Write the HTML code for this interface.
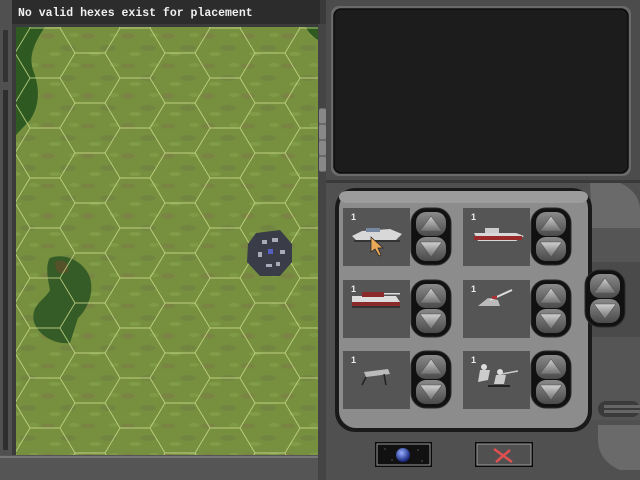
<!DOCTYPE html>
<html><head><meta charset="utf-8"><style>
html,body{margin:0;padding:0;background:#2a2a2a;width:640px;height:480px;overflow:hidden}
svg{display:block}
</style></head><body>
<svg width="640" height="480" viewBox="0 0 640 480" xmlns="http://www.w3.org/2000/svg">
<defs>
<pattern id="mottle" patternUnits="userSpaceOnUse" width="40" height="30">
<rect width="40" height="30" fill="#76903f"/>
<ellipse cx="8" cy="6" rx="7" ry="3" fill="#7d7a48" opacity="0.5"/>
<ellipse cx="28" cy="18" rx="8" ry="3" fill="#6f7e42" opacity="0.6"/>
<ellipse cx="15" cy="24" rx="6" ry="2" fill="#88a450" opacity="0.6"/>
<ellipse cx="34" cy="5" rx="5" ry="2" fill="#86a04c" opacity="0.6"/>
</pattern>
<pattern id="hex" patternUnits="userSpaceOnUse" x="0" y="3" width="90" height="50">
<g fill="none" stroke="#cfe08f" stroke-width="0.9" opacity="0.8">
<path d="M-15,0 L-30,-25 M-15,0 L-30,25 M-15,0 L15,0 M15,0 L30,-25 M15,0 L30,25 M30,25 L60,25 M60,25 L75,0 M60,25 L75,50 M75,0 L105,0 M75,50 L105,50 M-15,50 L15,50 M15,50 L30,25 M15,50 L30,75 M75,0 L60,-25"/>
</g>
</pattern>
<linearGradient id="btn" x1="0" y1="0" x2="0" y2="1"><stop offset="0" stop-color="#8a8a8a"/><stop offset="1" stop-color="#4a4a4a"/></linearGradient>
<linearGradient id="tri" x1="0" y1="0" x2="0" y2="1"><stop offset="0" stop-color="#d0d0d0"/><stop offset="1" stop-color="#707070"/></linearGradient>
<radialGradient id="earth" cx="0.4" cy="0.35" r="0.6"><stop offset="0" stop-color="#9ab0ff"/><stop offset="1" stop-color="#1a2a80"/></radialGradient>
<g id="arrows">
<rect x="0" y="0" width="40" height="57" rx="15" fill="#111" stroke="#2c2c2c"/>
<rect x="5" y="4" width="30" height="24" rx="10" fill="url(#btn)"/>
<rect x="5" y="29" width="30" height="24" rx="10" fill="url(#btn)"/>
<path d="M20,8 L31,23 L9,23Z" fill="url(#tri)" stroke="#555" stroke-width="0.6"/>
<path d="M9,34 L31,34 L20,49Z" fill="url(#tri)" stroke="#555" stroke-width="0.6"/>
</g>
</defs>

<rect x="0" y="0" width="640" height="480" fill="#3a3a3a"/>
<rect x="0" y="0" width="12" height="480" fill="#505050"/>
<rect x="3" y="30" width="5" height="52" fill="#333"/>
<rect x="3" y="90" width="5" height="360" fill="#2e2e2e"/>
<rect x="0" y="455" width="322" height="25" fill="#555"/>
<rect x="0" y="456" width="322" height="2" fill="#777"/>
<rect x="12" y="0" width="308" height="24" fill="#2c2c2c"/>
<text x="18" y="16" font-family="Liberation Mono, monospace" font-size="11.5" font-weight="bold" fill="#f0f0f0">No valid hexes exist for placement</text>

<rect x="16" y="27" width="302" height="428" fill="url(#mottle)"/>
<path d="M16,27 L45,27 C36,40 28,55 33,70 C40,88 40,105 30,120 L16,135Z" fill="#2e5a22"/>
<path d="M306,27 L318,27 L318,40 C312,36 308,32 306,27Z" fill="#2e5a22"/>
<path d="M50,258 C65,252 85,262 90,278 C95,295 85,312 78,318 L70,343 C55,345 38,335 34,322 C30,305 45,300 50,290 C48,280 45,265 50,258Z" fill="#355c26"/>
<path d="M55,262 C62,258 70,262 68,272 C60,276 55,272 55,262Z" fill="#6a4a2a" opacity="0.6"/>
<rect x="16" y="27" width="302" height="428" fill="url(#hex)"/>
<path d="M256,233 L280,230 L292,244 L292,262 L280,276 L260,276 L247,262 L248,244Z" fill="#3a3c48"/>
<g fill="#aab">
<rect x="262" y="240" width="5" height="4"/><rect x="272" y="238" width="6" height="4"/><rect x="258" y="252" width="4" height="5"/><rect x="280" y="250" width="5" height="4"/><rect x="266" y="264" width="6" height="3"/><rect x="276" y="262" width="4" height="4"/>
</g>
<rect x="268" y="249" width="5" height="5" fill="#5560c0"/>

<rect x="318" y="24" width="8" height="456" fill="#444"/>
<rect x="319" y="108" width="7" height="64" fill="#6a6a6a" rx="2"/>
<rect x="319" y="109" width="7" height="14" fill="#888" rx="2"/>
<rect x="319" y="125" width="7" height="14" fill="#888" rx="2"/>
<rect x="319" y="141" width="7" height="14" fill="#888" rx="2"/>
<rect x="319" y="157" width="7" height="14" fill="#888" rx="2"/>

<rect x="326" y="0" width="314" height="180" fill="#4c4c4c"/>
<rect x="331" y="6" width="300" height="170" rx="8" fill="#6a6a6a"/>
<rect x="334" y="9" width="294" height="164" rx="7" fill="#1c1c1c" stroke="#0c0c0c" stroke-width="1.5"/>

<rect x="326" y="181" width="314" height="299" fill="#505050"/>
<rect x="326" y="180" width="314" height="3" fill="#3a3a3a"/>
<path d="M590,183 L620,183 C632,188 640,198 640,210 L640,228 L592,228Z" fill="#6a6a6a"/>
<path d="M590,228 L640,228 L640,420 L590,420Z" fill="#555"/>
<rect x="590" y="262" width="50" height="75" fill="#4a4a4a"/>
<path d="M598,425 L640,425 L640,470 L620,470 C608,465 598,455 598,440Z" fill="#6a6a6a"/>
<rect x="598" y="401" width="42" height="16" rx="8" fill="#3a3a3a"/>
<rect x="604" y="405" width="36" height="3" fill="#666"/>
<rect x="604" y="410" width="36" height="3" fill="#666"/>
<rect x="335" y="188" width="257" height="244" rx="20" fill="#1a1a1a"/>
<rect x="339" y="191" width="249" height="237" rx="17" fill="#8c8c8c"/>
<rect x="339" y="191" width="249" height="12" rx="8" fill="#9c9c9c"/>

<g>
<rect x="343" y="208" width="67" height="58" fill="#555"/>
<rect x="463" y="208" width="67" height="58" fill="#555"/>
<rect x="343" y="280" width="67" height="58" fill="#555"/>
<rect x="463" y="280" width="67" height="58" fill="#555"/>
<rect x="343" y="351" width="67" height="58" fill="#555"/>
<rect x="463" y="351" width="67" height="58" fill="#555"/>
<g fill="#eee" font-family="Liberation Sans, sans-serif" font-size="9" font-weight="bold">
<text x="351" y="220">1</text><text x="471" y="220">1</text>
<text x="351" y="292">1</text><text x="471" y="292">1</text>
<text x="351" y="363">1</text><text x="471" y="363">1</text>
</g>
</g>
<use href="#arrows" x="411" y="208"/>
<use href="#arrows" x="531" y="208"/>
<use href="#arrows" x="411" y="280"/>
<use href="#arrows" x="531" y="280"/>
<use href="#arrows" x="411" y="351"/>
<use href="#arrows" x="531" y="351"/>
<use href="#arrows" x="585" y="270"/>

<g>
<path d="M352,236 L362,231 L390,229 L402,234 L396,240 L356,240Z" fill="#d8d8d8"/>
<rect x="366" y="228" width="14" height="4" fill="#7888a0"/>
<rect x="354" y="240" width="46" height="2" fill="#333"/>
<path d="M371,237 L371,252 L375,249 L379,256 L381,255 L378,248 L383,248Z" fill="#e8a858" stroke="#222" stroke-width="0.7"/>
<path d="M474,233 L516,233 L524,236 L516,241 L478,241Z" fill="#d8d8d8"/>
<rect x="474" y="236" width="48" height="4" fill="#9a2a2a"/>
<rect x="485" y="228" width="14" height="5" fill="#ccc"/>
<path d="M352,296 L396,296 L400,302 L352,302Z" fill="#ddd"/>
<rect x="362" y="292" width="22" height="5" fill="#8a2a2a"/>
<rect x="384" y="293" width="16" height="1.5" fill="#ddd"/>
<rect x="352" y="302" width="48" height="4" fill="#8a2a2a"/>
<rect x="352" y="306" width="48" height="2" fill="#333"/>
<path d="M478,306 L488,298 L498,300 L500,306 Z" fill="#bbb"/>
<path d="M490,300 L512,290" stroke="#ddd" stroke-width="2"/>
<rect x="492" y="296" width="5" height="3" fill="#a33"/>
<path d="M364,372 L388,369 L390,374 L366,377Z" fill="#bbb"/>
<path d="M366,377 L362,385 M384,374 L386,385" stroke="#222" stroke-width="1.5"/>
<circle cx="484" cy="367" r="3" fill="#ddd"/><path d="M480,370 L490,370 L488,380 L478,382Z" fill="#ccc"/>
<circle cx="500" cy="372" r="3" fill="#ddd"/><path d="M496,375 L506,375 L504,384 L494,384Z" fill="#ccc"/>
<path d="M502,374 L518,371" stroke="#ccc" stroke-width="1.5"/>
<rect x="488" y="385" width="22" height="2" fill="#222"/>
</g>

<rect x="375" y="442" width="57" height="25" fill="#0a0a0a"/>
<rect x="377" y="444" width="53" height="21" fill="#111" stroke="#9a9a9a" stroke-width="1"/>
<circle cx="403" cy="455" r="7" fill="url(#earth)"/>
<g fill="#888"><circle cx="385" cy="449" r="0.6"/><circle cx="392" cy="460" r="0.6"/><circle cx="418" cy="450" r="0.6"/><circle cx="422" cy="461" r="0.6"/></g>
<rect x="475" y="442" width="58" height="25" fill="#0a0a0a"/>
<rect x="477" y="444" width="54" height="21" fill="#505050" stroke="#9a9a9a" stroke-width="1"/>
<path d="M494,449 L512,462 M510,450 L496,462" stroke="#e05050" stroke-width="2.5"/>
</svg>
</body></html>
